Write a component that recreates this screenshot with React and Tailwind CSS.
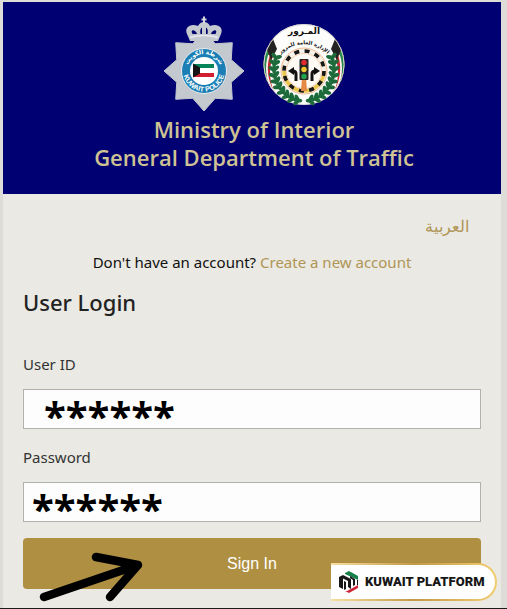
const starPoints = Array.from({ length: 16 }, (_, i) => {
  const radius = i % 2 !== 0 ? 29.5 : 40;
  const angle = (i * Math.PI) / 8;
  return `${50 + radius * Math.sin(angle)},${61 - radius * Math.cos(angle)}`;
}).join(" ");

const leaves = Array.from({ length: 10 }, (_, i) => {
  const turn = 198 - i * 11;
  const angle = (turn * Math.PI) / 180;
  return { id: i, x: 50 + 30 * Math.cos(angle), y: 59 + 32 * Math.sin(angle), turn };
});

function Wreath({ mirrored }) {
  return (
    <g fill="#1d6b3a" transform={mirrored ? "translate(100 0) scale(-1 1)" : undefined}>
      {leaves.map((leaf) => (
        <g key={leaf.id} transform={`translate(${leaf.x} ${leaf.y}) rotate(${leaf.turn})`}>
          <ellipse cx="3" cy="1" rx="4" ry="2" transform="rotate(35)" />
          <ellipse cx="-3" cy="1" rx="4" ry="2" transform="rotate(-35)" />
          <ellipse cx="0" cy="0" rx="1.8" ry="3" />
        </g>
      ))}
    </g>
  );
}

function PoliceCrest() {
  return (
    <svg viewBox="9 6 82 96" className="h-24 w-[82px]" role="img" aria-label="Kuwait Police">
      <defs>
        <pattern id="beads" width="2" height="2" patternUnits="userSpaceOnUse">
          <rect width="2" height="2" fill="#a9afba" />
          <circle cx="1" cy="1" r="0.8" fill="#e8eaed" />
        </pattern>
        <path id="police-top" d="M33 61a17 17 0 0 1 34 0" />
        <path id="police-bottom" d="M30 55a20.800 20.800 0 1 0 40 0" />
      </defs>
      <polygon points={starPoints} fill="url(#beads)" stroke="#c3c7ce" strokeWidth="1" strokeLinejoin="round" />
      <path d="M36 31 33 24C30 17 37 13 44 16q2-4 6-4t6 4c7-3 14 1 11 8l-3 7Z" fill="url(#beads)" />
      <path d="M38.500 24c-3-5 3-5 4.500 0ZM61.500 24c3-5-3-5-4.500 0ZM46.500 24q-1-5 1.500-6.500V24ZM53.500 24q1-5-1.500-6.500V24Z" fill="#00006c" />
      <path d="M50 6.500v7M47.500 9.500h5" stroke="#d3d6dc" strokeWidth="2" />
      <path d="M36 27.500q14-4 28 0" fill="none" stroke="#e8eaed" strokeWidth="1.500" />
      <circle cx="50" cy="61" r="22.500" fill="#1b7fb5" stroke="#e9edf0" strokeWidth="1" />
      <circle cx="50" cy="61" r="14" fill="#fff" />
      <path d="M39 54h21v4H39Z" fill="#07845a" />
      <path d="M39 63h21v4H39Z" fill="#d31f32" />
      <path d="M39 53.500l7 4v6l-7 4Z" fill="#151515" />
      <text fill="#fff" fontSize="7" fontWeight="700" fontFamily="Liberation Sans, sans-serif">
        <textPath href="#police-bottom" startOffset="50%" textAnchor="middle">KUWAIT POLICE</textPath>
      </text>
      <text fill="#fff" fontSize="6" fontWeight="700" fontFamily="DejaVu Sans, sans-serif">
        <textPath href="#police-top" startOffset="50%" textAnchor="middle">شرطة الكويت</textPath>
      </text>
    </svg>
  );
}

function TrafficCrest() {
  return (
    <svg viewBox="9 6 82 96" className="h-24 w-[82px]" role="img" aria-label="General Department of Traffic">
      <defs>
        <clipPath id="traffic-disc"><circle cx="50" cy="54.500" r="40.500" /></clipPath>
        <path id="traffic-arc" d="M24 47a33 33 0 0 1 52 0" />
      </defs>
      <g clipPath="url(#traffic-disc)">
        <rect x="9" y="13" width="82" height="83" fill="#fdfdfb" />
        <path d="M18 29 9 48v14l8 23 5 1C14 70 14 55 22 39Z" fill="#c72830" />
        <path d="m82 29 9 19v14l-8 23-5 1c8-16 8-31 0-47Z" fill="#c72830" />
        <path d="M12 39 8 54l4 24 5 3C11 68 11 53 15 43Z" fill="#21884a" />
        <path d="m88 39 4 15-4 24-5 3c6-13 6-28 2-38Z" fill="#21884a" />
        <path d="M15 45c-4 12-2 26 4 36M85 45c4 12 2 26-4 36" fill="none" stroke="#f4f4ef" strokeWidth="1.800" />
        <path d="m17 24 6 15-6 11-4-11Z" fill="#222" />
        <path d="m83 24-6 15 6 11 4-11Z" fill="#222" />
      </g>
      <circle cx="50" cy="54.500" r="40" fill="none" stroke="#d4d3cf" strokeWidth="1" />
      <Wreath />
      <Wreath mirrored />
      <circle cx="50" cy="61" r="23" fill="#fff7ec" stroke="#eeb996" strokeWidth="1" />
      <circle cx="50" cy="61" r="20" fill="none" stroke="#e8c74c" strokeWidth="3.600" />
      <path d="M30 61a20 20 0 0 1 40 0" fill="none" stroke="#f6f2e9" strokeWidth="3.800" />
      <circle cx="50" cy="61" r="20" fill="none" stroke="#171717" strokeWidth="3.600" strokeDasharray="5 5.472" />
      <circle cx="50" cy="61" r="17.500" fill="#fffaf4" stroke="#edc2a3" strokeWidth="0.700" />
      <path d="M42 71v-7q0-3-3-3M58 71v-7q0-3 3-3" fill="none" stroke="#111" strokeWidth="3" />
      <path d="m34 61 6-4v8ZM66 61l-6-4v8Z" fill="#111" />
      <path d="M48 68h4l1 13h-6Z" fill="#e38b45" />
      <rect x="45.500" y="49" width="9" height="21" rx="1" fill="#252525" />
      <circle cx="50" cy="52.500" r="2.700" fill="#e32c2d" />
      <circle cx="50" cy="59.500" r="2.700" fill="#f2c72f" />
      <circle cx="50" cy="66.500" r="2.700" fill="#20a44c" />
      <text x="50" y="24" textAnchor="middle" fill="#111" fontSize="9" fontWeight="700" fontFamily="DejaVu Sans, sans-serif">المـرور</text>
      <text fill="#111" fontSize="5.200" fontWeight="700" fontFamily="DejaVu Sans, sans-serif">
        <textPath href="#traffic-arc" startOffset="50%" textAnchor="middle">الإدارة العامة للمرور</textPath>
      </text>
    </svg>
  );
}

function Field({ id, label, indent }) {
  return (
    <div className="flex flex-col gap-[13px]">
      <label htmlFor={id} className="text-[15px] leading-6 text-[#333]">{label}</label>
      <div className="h-10 overflow-hidden border border-[#b1b1ae] bg-[#fdfdfd]">
        <input
          id={id}
          type="text"
          defaultValue="******"
          className={`block h-[52px] w-full bg-transparent font-['Open_Sans',sans-serif] text-[40px] leading-[52px] font-bold text-black outline-none ${indent}`}
        />
      </div>
    </div>
  );
}

function PlatformBadge() {
  return (
    <div className="absolute right-2.5 bottom-[7px] w-[166px] rounded-r-full bg-linear-to-r from-[#f8dfa0] via-[#c39a45] to-[#f2ce70] py-0.5 pr-0.5">
      <div className="flex h-[34px] items-center gap-1.5 rounded-r-full bg-white pl-2">
        <svg viewBox="0 0 20 22" className="h-[22px] w-5 shrink-0" aria-hidden="true">
          <path d="m6 2 4-2 9 5v4L6 3Z" fill="#16814b" />
          <path d="m8 20 11-6v3l-9 5-4-2Z" fill="#cf2639" />
          <path d="M0 6 4 4l8 4v10l-3-2v-6L4 7.500V18l-4-2Z" fill="#171717" />
          <path d="m5 10 2 1v7l-2 1ZM11 5l5 3v6l-2 1V9l-3-2Z" fill="#171717" />
          <path d="M18.500 9v5" stroke="#171717" strokeWidth="1" />
        </svg>
        <span className="font-[Roboto,sans-serif] text-[13px] leading-5 font-black whitespace-nowrap text-[#171717]">KUWAIT PLATFORM</span>
      </div>
    </div>
  );
}

export default function App() {
  return (
    <div className="relative min-h-screen border-b border-[#1b1b1b] bg-[#dddcd9] pt-0.5 pr-1.5 pl-[3px] font-['Noto_Sans',sans-serif]">
      <main className="min-h-[606px] bg-[#eae9e3]">
        <header className="flex h-48 flex-col items-center bg-[#000073] pt-3.5 pl-1">
          <div className="flex gap-[18px]">
            <PoliceCrest />
            <TrafficCrest />
          </div>
          <h1 className="mt-[3px] text-center font-['Open_Sans',sans-serif] text-[22px] leading-7 font-semibold text-[#cfc294]">
            Ministry of Interior<br />General Department of Traffic
          </h1>
        </header>
        <div className="px-5 pt-5">
          <div className="flex justify-end pr-3">
            <a href="#arabic" lang="ar" dir="rtl" className="text-[16px] leading-6 text-[#b09555]">العربية</a>
          </div>
          <p className="mt-3 text-center text-[15px] leading-6 text-[#111]">
            Don't have an account? <a href="#register" className="text-[#b09555]">Create a new account</a>
          </p>
          <h2 className="mt-3 text-[22px] leading-8 font-medium text-[#222]">User Login</h2>
          <form className="mt-[34px] flex flex-col gap-4" onSubmit={(event) => event.preventDefault()}>
            <Field id="user-id" label="User ID" indent="pl-5" />
            <Field id="password" label="Password" indent="pl-2" />
            <button type="submit" className="h-[51px] rounded-[4px] bg-[#af9042] font-['Liberation_Sans',sans-serif] text-[16px] text-white">Sign In</button>
          </form>
        </div>
      </main>
      <svg viewBox="0 0 106 52" className="pointer-events-none absolute bottom-[5px] left-[38px] h-[52px] w-[106px]" aria-hidden="true">
        <path d="M6 46 100 14M58 6l42 8-28 32" fill="none" stroke="#000" strokeWidth="8.500" strokeLinecap="round" strokeLinejoin="round" />
      </svg>
      <PlatformBadge />
    </div>
  );
}
